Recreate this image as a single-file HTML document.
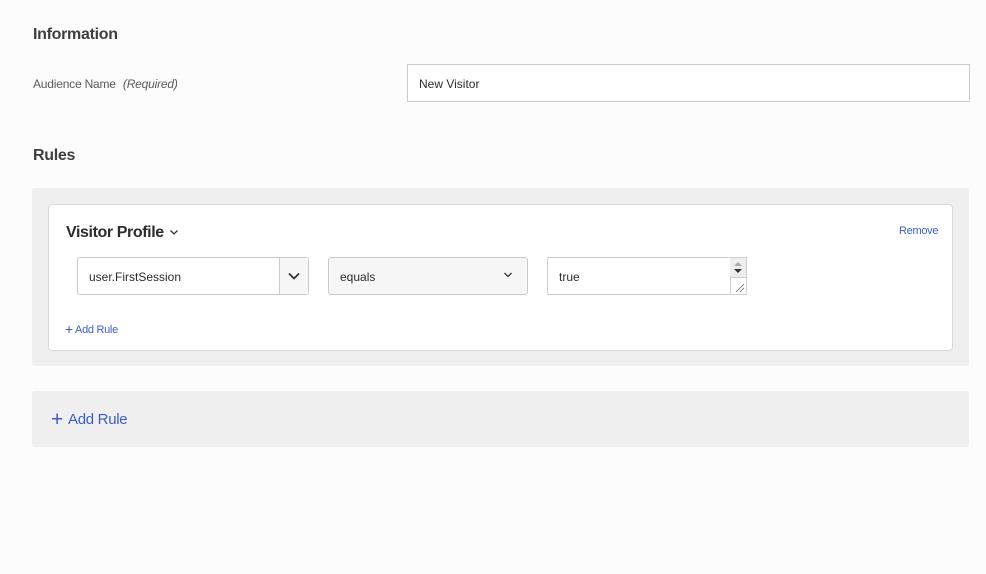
<!DOCTYPE html>
<html><head><style>
*{box-sizing:border-box;margin:0;padding:0}
body{width:986px;height:574px;background:#fcfcfc;font-family:"Liberation Sans",sans-serif;color:#2c2c2c;position:relative;overflow:hidden}
.a{position:absolute}
h2{position:absolute;font-size:16px;font-weight:bold;color:#3e3e3e;letter-spacing:-0.3px}
.lbl{font-size:12px;color:#5a5a5a}
.box{border:1px solid #cacaca;background:#fff}
.t{font-size:12px;color:#2c2c2c}
.link{color:#3f5ec4}
</style></head><body>
<h2 style="left:33px;top:26px">Information</h2>
<div class="a lbl" style="left:33px;top:77px;letter-spacing:-0.2px">Audience Name <i style="margin-left:4px">(Required)</i></div>
<div class="a box" style="left:407px;top:64px;width:563px;height:38px"><span class="a t" style="left:11px;top:12px">New Visitor</span></div>
<h2 style="left:33px;top:147px">Rules</h2>
<div class="a" style="left:32px;top:188px;width:937px;height:178px;background:#efefef;border-radius:3px"></div>
<div class="a" style="left:48px;top:204px;width:905px;height:147px;background:#fff;border:1px solid #d8d8d8;border-radius:4px"></div>
<div class="a" style="left:66px;top:224px;font-size:16px;font-weight:bold;color:#2c2c2c;letter-spacing:-0.4px">Visitor Profile</div>
<svg class="a" style="left:169px;top:228px" width="10" height="8"><path d="M1.5 2.5 L5 6 L8.5 2.5" fill="none" stroke="#333" stroke-width="1.3"/></svg>
<div class="a link" style="left:899px;top:225px;font-size:11px;letter-spacing:-0.3px">Remove</div>
<div class="a box" style="left:77px;top:257px;width:232px;height:38px;border-radius:3px"><span class="a t" style="left:11px;top:12px">user.FirstSession</span></div>
<div class="a" style="left:279px;top:258px;width:29px;height:36px;background:#f7f7f7;border-left:1px solid #cacaca;border-radius:0 3px 3px 0"></div>
<svg class="a" style="left:287px;top:271px" width="14" height="10"><path d="M2 2.5 L7 7.5 L12 2.5" fill="none" stroke="#333" stroke-width="1.8"/></svg>
<div class="a" style="left:328px;top:257px;width:200px;height:38px;background:#f7f7f7;border:1px solid #cacaca;border-radius:3px"><span class="a t" style="left:11px;top:12px">equals</span></div>
<svg class="a" style="left:503px;top:271px" width="10" height="8"><path d="M1.5 2 L5 5.5 L8.5 2" fill="none" stroke="#333" stroke-width="1.3"/></svg>
<div class="a box" style="left:547px;top:257px;width:200px;height:38px;border-color:#cfcfcf"><span class="a t" style="left:11px;top:12px">true</span></div>
<div class="a" style="left:730px;top:258px;width:16px;height:19px;background:#eee"></div>
<svg class="a" style="left:730px;top:258px" width="16" height="36"><path d="M4 8 L8 4 L12 8Z" fill="#aaa"/><path d="M4 11 L8 15 L12 11Z" fill="#333"/><path d="M0 19.5 H16 M0.5 19 V36" stroke="#cfcfcf"/><path d="M6 34 L14 26 M10 34 L14 30" stroke="#666" stroke-width="0.8"/></svg>
<div class="a link" style="left:65px;top:321px;font-size:11px;letter-spacing:-0.3px"><span style="font-size:14px;vertical-align:-1px">+</span> Add Rule</div>
<div class="a" style="left:32px;top:391px;width:937px;height:56px;background:#efefef;border-radius:3px"></div>
<div class="a link" style="left:51px;top:408px;font-size:15px;letter-spacing:-0.3px"><span style="font-size:21px;vertical-align:-2px;margin-right:2px">+</span> Add Rule</div>
</body></html>
